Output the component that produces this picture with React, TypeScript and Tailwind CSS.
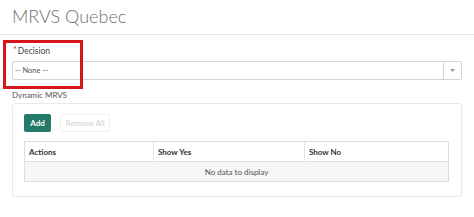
export default function App() {
  return (
    <div className="relative w-[474px] h-[217px] bg-white text-[#444] font-['Lato','Liberation_Sans',sans-serif] overflow-hidden">
      <div className="h-[35px] border-b border-[#e6e6e6] pl-[12px] pt-[4px]">
        <h1 className="text-[18px] font-light text-[#6f6f6f] leading-[24px]">MRVS Quebec</h1>
      </div>

      <div className="px-[12px] pt-[10px]">
        <label className="flex items-start h-[16px] pl-[1px] text-[8.5px] leading-[12px]">
          <span className="text-[#d3212a] text-[9px] leading-[10px] mr-[1px]">*</span>
          Decision
        </label>
        <div className="flex h-[19px] border border-[#d5d5d5] rounded-[2px]">
          <div className="flex-1 flex items-center pl-[2px] text-[7.5px] text-[#555]">-- None --</div>
          <div className="w-[18px] border-l border-[#d5d5d5] flex items-center justify-center">
            <svg width="5" height="3" viewBox="0 0 5 3">
              <path d="M0 0 L5 0 L2.5 3 Z" fill="#999" />
            </svg>
          </div>
        </div>

        <div className="mt-[10px] text-[8px] leading-[10px] text-[#555]">Dynamic MRVS</div>

        <div className="mt-[3px] h-[94px] border border-[#e9e9e9] rounded-[3px] pl-[11px] pr-[12px] pt-[10px]">
          <div className="flex gap-[9px]">
            <button className="w-[27px] h-[18px] rounded-[2px] bg-[#247a68] text-white text-[8px] font-bold">Add</button>
            <button className="w-[50px] h-[18px] rounded-[2px] border border-[#f0f0f0] text-[#cfcfcf] text-[8px]">Remove All</button>
          </div>
          <div className="mt-[9px] border border-[#dedede]">
            <div className="grid grid-cols-[128px_151px_1fr] h-[19px] text-[8px] font-bold text-[#333]">
              <div className="flex items-center pl-[4px]">Actions</div>
              <div className="flex items-center pl-[4px] border-l border-[#e3e3e3]">Show Yes</div>
              <div className="flex items-center pl-[4px] border-l border-[#e3e3e3]">Show No</div>
            </div>
            <div className="h-[20px] border-t border-[#dedede] bg-[#f6f6f6] flex items-center justify-center text-[8px] text-[#555]">
              No data to display
            </div>
          </div>
        </div>
      </div>

      <div className="absolute left-[3px] top-[40px] w-[80px] h-[49px] border-[3px] border-[#d7141c]" />
    </div>
  );
}
